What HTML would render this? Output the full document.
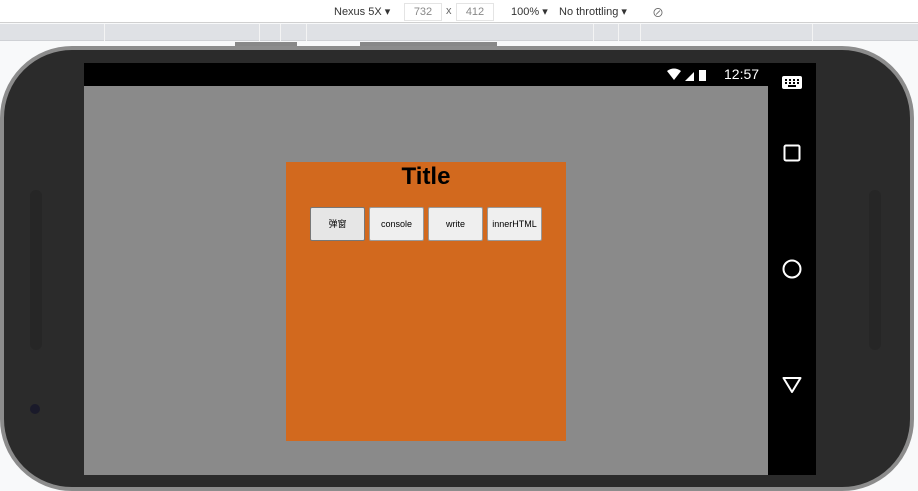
<!DOCTYPE html>
<html><head><meta charset="utf-8"><style>
*{margin:0;padding:0;box-sizing:border-box}
body{width:918px;height:491px;background:#f8f9fa;position:relative;overflow:hidden;font-family:"Liberation Sans","Noto Sans CJK SC",sans-serif}
.tb{position:absolute;top:0;left:0;width:918px;height:23px;background:#fff;border-bottom:1px solid #d0d0d0;font-size:11px;color:#333}
.tb span{position:absolute;top:5px}
.box{position:absolute;top:3px;height:18px;border:1px solid #e4e4e4;color:#888;text-align:center;line-height:16px}
.ruler{position:absolute;top:24px;left:0;width:918px;height:17px;background:#dfe1e5;border-bottom:1px solid #cfd1d5}
.ruler i{position:absolute;top:0;width:1px;height:17px;background:#f4f4f4}
.tab{position:absolute;top:42px;height:4px;background:#888}
.phone{position:absolute;left:0;top:46px;width:914px;height:445px;background:#2b2b2b;border:4px solid #8c8c8c;border-radius:72px}
.side{position:absolute;width:12px;height:160px;background:#262626;border-radius:6px;top:190px}
.status{position:absolute;left:84px;top:63px;width:732px;height:23px;background:#000;color:#fff;font-size:14px}
.content{position:absolute;left:84px;top:86px;width:684px;height:389px;background:#8a8a8a}
.nav{position:absolute;left:768px;top:86px;width:48px;height:389px;background:#000}
.org{position:absolute;left:286px;top:162px;width:280px;height:279px;background:#d2691e}
h1{position:absolute;top:1px;width:100%;text-align:center;font-size:24px;font-weight:bold;font-family:"Liberation Sans",sans-serif;color:#000}
.btn{position:absolute;top:45px;width:55px;height:34px;background:#efefef;border:1px solid #999;border-radius:2px;font-size:9px;text-align:center;line-height:32px;color:#000}
</style></head><body>
<div class="tb">
<span style="left:334px">Nexus 5X ▾</span>
<div class="box" style="left:404px;width:38px">732</div>
<span style="left:446px;color:#666">x</span>
<div class="box" style="left:456px;width:38px">412</div>
<span style="left:511px">100% ▾</span>
<span style="left:559px">No throttling ▾</span>
<span style="left:652px;font-size:12px;top:4px;color:#666">⊘</span>
</div>
<div class="ruler"><i style="left:104px"></i><i style="left:259px"></i><i style="left:280px"></i><i style="left:306px"></i><i style="left:593px"></i><i style="left:618px"></i><i style="left:640px"></i><i style="left:812px"></i></div>
<div class="tab" style="left:235px;width:62px"></div>
<div class="tab" style="left:360px;width:137px"></div>
<div class="phone"></div>
<div class="side" style="left:30px"></div>
<div class="side" style="left:869px"></div>
<div style="position:absolute;left:30px;top:404px;width:10px;height:10px;border-radius:50%;background:#1a1a2a"></div>
<div class="status">
<svg style="position:absolute;left:582px;top:5px" width="40" height="14"><path d="M1 3 Q8 -2 15 3 L8 12Z" fill="#fff"/><path d="M19 13 L28 4 L28 13Z" fill="#fff"/><rect x="33" y="2" width="7" height="11" fill="#fff"/></svg>
<span style="position:absolute;left:640px;top:3px">12:57</span>
</div>
<div class="content"><div class="org" style="left:202px;top:76px">
<h1>Title</h1>
<div class="btn" style="left:24px;background:#e6e6e6;border-color:#777">弹窗</div>
<div class="btn" style="left:83px">console</div>
<div class="btn" style="left:142px">write</div>
<div class="btn" style="left:201px">innerHTML</div>
</div></div>
<div class="nav">
<svg style="position:absolute;left:0;top:0" width="48" height="389">
<rect x="16.5" y="59.5" width="15" height="15" rx="1.5" fill="none" stroke="#fff" stroke-width="2"/>
<circle cx="24" cy="183" r="8.5" fill="none" stroke="#fff" stroke-width="2"/>
<path d="M15.5 292 L32.5 292 L24 306Z" fill="none" stroke="#fff" stroke-width="2" stroke-linejoin="round"/>
</svg>
</div>
<svg style="position:absolute;left:782px;top:75px;z-index:5" width="20" height="16"><rect x="0" y="1" width="20" height="13" rx="2" fill="#fff"/><g fill="#000"><rect x="3" y="4" width="2" height="2"/><rect x="7" y="4" width="2" height="2"/><rect x="11" y="4" width="2" height="2"/><rect x="15" y="4" width="2" height="2"/><rect x="3" y="7" width="2" height="2"/><rect x="7" y="7" width="2" height="2"/><rect x="11" y="7" width="2" height="2"/><rect x="15" y="7" width="2" height="2"/><rect x="6" y="10" width="8" height="2"/></g></svg>
</body></html>
